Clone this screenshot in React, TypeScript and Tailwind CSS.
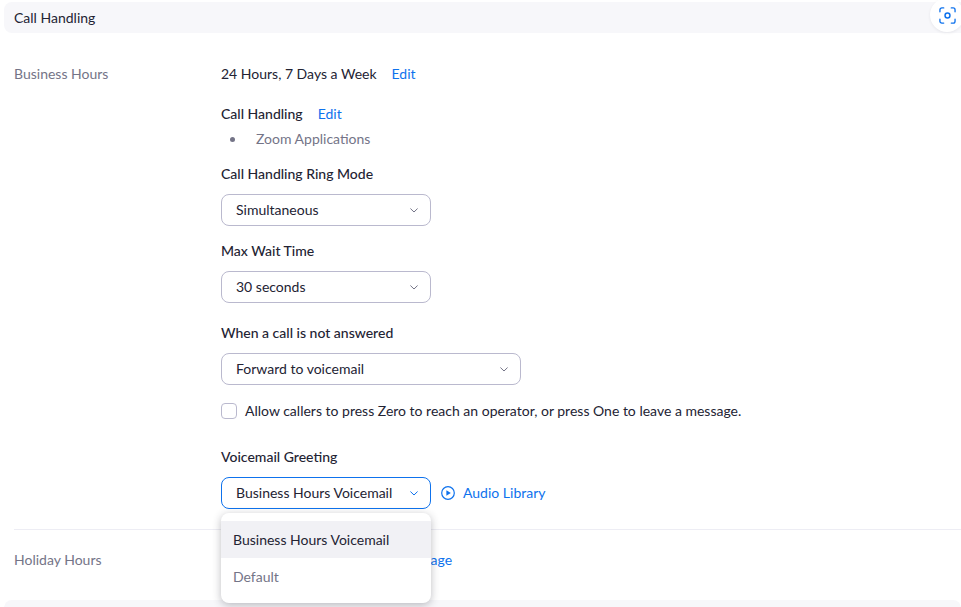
import React from "react";

function Chevron({ className }: { className: string }) {
  return (
    <svg width="8" height="5" viewBox="0 0 8 5" fill="none" className={className}>
      <path d="M0.7 0.8L4 4l3.3-3.2" stroke="currentColor" strokeWidth="1" strokeLinecap="round" strokeLinejoin="round" />
    </svg>
  );
}

function Select({ label, width, focused }: { label: string; width: string; focused?: boolean }) {
  return (
    <div
      className={`flex h-8 items-center justify-between rounded-lg border bg-white pl-[14px] pr-[12px] text-[14px] leading-5 text-[#232333] ${width} ${
        focused ? "border-[#0e72ed]" : "border-[#bab9ce]"
      }`}
    >
      <span>{label}</span>
      <Chevron className={focused ? "text-[#0e72ed]" : "text-[#747487]"} />
    </div>
  );
}

function Label({ children, className }: { children: React.ReactNode; className: string }) {
  return <div className={`text-[14px] font-medium leading-5 text-[#232333] ${className}`}>{children}</div>;
}

export default function App() {
  return (
    <div className="relative h-[607px] w-[961px] overflow-hidden bg-white font-['Lato',sans-serif] text-[14px] leading-5">
      <div className="ml-1 mt-[2px] flex h-[31px] items-center rounded-l-lg bg-[#f7f7fa] pl-[10px] text-[#232333]">
        Call Handling
      </div>

      <div className="ml-[14px] mt-[31px] flex">
        <div className="w-[207px] text-[#747487]">Business Hours</div>
        <div className="flex-1">
          <div className="flex gap-[15px] text-[#232333]">
            <span>24 Hours, 7 Days a Week</span>
            <a className="text-[#0e72ed]">Edit</a>
          </div>
          <div className="mt-5 flex gap-[15px]">
            <span className="font-medium text-[#232333]">Call Handling</span>
            <a className="text-[#0e72ed]">Edit</a>
          </div>
          <div className="mt-[5px] flex items-center text-[#747487]">
            <span className="ml-[9px] h-[5px] w-[5px] rounded-full bg-[#747487]" />
            <span className="ml-[21px]">Zoom Applications</span>
          </div>
          <Label className="mt-[15px]">Call Handling Ring Mode</Label>
          <Select label="Simultaneous" width="mt-[10px] w-[210px]" />
          <Label className="mt-[15px]">Max Wait Time</Label>
          <Select label="30 seconds" width="mt-[10px] w-[210px]" />
          <Label className="mt-5">When a call is not answered</Label>
          <Select label="Forward to voicemail" width="mt-[10px] w-[300px]" />
          <div className="mt-[16px] flex items-center gap-2">
            <span className="h-4 w-4 rounded-[4px] border border-[#bab9ce] bg-white" />
            <span className="text-[#232333]">Allow callers to press Zero to reach an operator, or press One to leave a message.</span>
          </div>
          <Label className="mt-[26px]">Voicemail Greeting</Label>
          <div className="mt-[10px] flex items-center">
            <Select label="Business Hours Voicemail" width="w-[210px]" focused />
            <svg width="16" height="16" viewBox="0 0 16 16" fill="none" className="ml-[9px] text-[#0e72ed]">
              <circle cx="8" cy="8" r="6.3" stroke="currentColor" strokeWidth="1.2" />
              <path d="M6.4 5.2v5.6L10.8 8z" fill="currentColor" />
            </svg>
            <a className="ml-[7px] text-[#0e72ed]">Audio Library</a>
          </div>
        </div>
      </div>

      <div className="ml-[14px] mt-5 h-px bg-[#ededf4]" />

      <div className="ml-[14px] mt-5 flex">
        <div className="w-[207px] text-[#747487]">Holiday Hours</div>
        <a className="ml-[182px] text-[#0e72ed]">Manage</a>
      </div>

      <div className="ml-1 mt-[30px] h-2 rounded-t-lg bg-[#f7f7fa]" />

      <div className="absolute left-[930px] top-[-2px] flex h-[34px] w-[34px] items-center justify-center rounded-full bg-white shadow-[0_1px_3px_rgba(35,35,51,0.08)]">
        <svg width="17" height="17" viewBox="0 0 18 18" fill="none" className="text-[#0e72ed]">
          <path
            d="M1 5V3a2 2 0 0 1 2-2h2M13 1h2a2 2 0 0 1 2 2v2M17 13v2a2 2 0 0 1-2 2h-2M5 17H3a2 2 0 0 1-2-2v-2"
            stroke="currentColor"
            strokeWidth="1.4"
            strokeLinecap="round"
          />
          <circle cx="9" cy="9" r="2.6" stroke="currentColor" strokeWidth="1.6" />
        </svg>
      </div>

      <div className="absolute left-[221px] top-[513px] h-[90px] w-[210px] rounded-lg bg-white py-2 shadow-[0_2px_8px_rgba(35,35,51,0.3)]">
        <div className="flex h-[37px] items-center bg-[#f1f1f5] pl-3 text-[#232333]">Business Hours Voicemail</div>
        <div className="flex h-[37px] items-center pl-3 text-[#747487]">Default</div>
      </div>
    </div>
  );
}
